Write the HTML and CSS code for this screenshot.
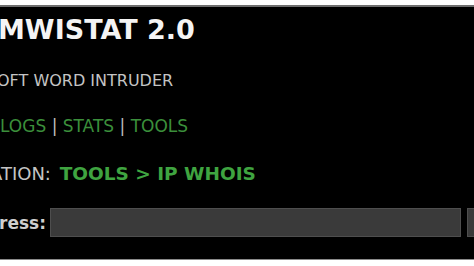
FILE: index.html
```html
<!DOCTYPE html>
<html>
<head>
<meta charset="utf-8">
<link rel="stylesheet" href="styles.css">
</head>
<body>
<div class="frame">
  <h1 class="title">MWISTAT 2.0</h1>
  <p class="sub"><span class="cut-o">OFT WORD INTRUDER</span></p>
  <p class="nav"><a class="link">LOGS</a> <span class="sep">|</span> <a class="link">STATS</a> <span class="sep">|</span> <a class="link">TOOLS</a></p>
  <p class="loc"><span class="cut-a">ATION:</span> <span class="crumb">TOOLS &gt; IP WHOIS</span></p>
  <div class="row">
    <label class="lbl">ress:</label>
    <div class="field"></div>
    <div class="btn"></div>
  </div>
</div>
</body>
</html>
```
FILE: styles.css
```css
html, body {
  margin: 0;
  padding: 0;
  background: #ffffff;
}
body {
  font-family: "DejaVu Sans", Verdana, sans-serif;
  width: 474px;
  height: 266px;
  overflow: hidden;
}
.frame {
  margin-top: 5px;
  border-top: 2px solid #6e6e6e;
  border-bottom: 1px solid #8a8a8a;
  background: #000000;
  height: 255px;
  overflow: hidden;
  padding-top: 8px;
  box-sizing: border-box;
  display: flex;
  flex-direction: column;
}
.title {
  margin: 0 0 0 -2px;
  font-size: 27px;
  line-height: 30px;
  font-weight: bold;
  color: #f4f4f4;
  white-space: nowrap;
}
.sub, .nav, .loc {
  margin: 0;
  font-size: 17px;
  line-height: 20px;
  color: #c4c4c4;
  white-space: nowrap;
}
.sub { margin-top: 26px; font-size: 16px; }
.nav { margin-top: 25px; }
.loc { margin-top: 28px; font-size: 18px; }
.cut-o { margin-left: -3px; }
.cut-a { margin-left: -10px; }
.link { color: #3b8f3b; }
.sep { color: #bdbdbd; }
.crumb { color: #3fa440; font-weight: bold; font-size: 18.5px; margin-left: 3px; }
.row {
  margin-top: 24px;
  display: flex;
  align-items: center;
  gap: 4px;
}
.lbl {
  font-size: 17px;
  line-height: 20px;
  font-weight: bold;
  color: #cfcfcf;
  margin-left: -1px;
  flex: none;
}
.field {
  flex: none;
  width: 411px;
  height: 29px;
  box-sizing: border-box;
  background: #3a3a3a;
  border: 1px solid #4e4e4e;
  margin-left: auto;
}
.btn {
  flex: none;
  width: 40px;
  height: 29px;
  box-sizing: border-box;
  background: #3a3a3a;
  border: 1px solid #4e4e4e;
  margin-left: 2px;
  margin-right: -33px;
}
```
